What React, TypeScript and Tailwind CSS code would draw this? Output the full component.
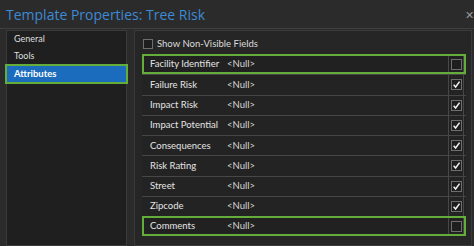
import React from 'react';

type Field = { name: string; visible: boolean; highlight?: boolean };

const FIELDS: Field[] = [
  { name: 'Facility Identifier', visible: false, highlight: true },
  { name: 'Failure Risk', visible: true },
  { name: 'Impact Risk', visible: true },
  { name: 'Impact Potential', visible: true },
  { name: 'Consequences', visible: true },
  { name: 'Risk Rating', visible: true },
  { name: 'Street', visible: true },
  { name: 'Zipcode', visible: true },
  { name: 'Comments', visible: false, highlight: true },
];

function Check({ checked }: { checked: boolean }) {
  return (
    <span className="flex h-[11px] w-[11px] items-center justify-center border border-[#6e6e6e] bg-[#1e1e1e]">
      {checked && (
        <svg width="9" height="9" viewBox="0 0 10 10">
          <path d="M1.8 5.4 L4 7.8 L8.4 1.8" fill="none" stroke="#f2f2f2" strokeWidth="1.6" />
        </svg>
      )}
    </span>
  );
}

function Row({ field }: { field: Field }) {
  return (
    <div
      className={
        field.highlight
          ? 'flex h-[20.25px] items-center border-2 border-[#64ad3a] bg-[#212121]'
          : 'flex h-[20.25px] items-center border-t border-[#474747] bg-[#232323] px-[2px]'
      }
    >
      <span className="w-[83px] truncate pl-[6px] text-[#e4e4e4]">{field.name}</span>
      <span className="flex-1 text-[#d8d8d8]">&lt;Null&gt;</span>
      <span className="flex h-full w-[16px] items-center justify-center border-x border-[#474747]">
        <Check checked={field.visible} />
      </span>
    </div>
  );
}

export default function App() {
  return (
    <div
      className="flex h-[246px] w-[474px] flex-col overflow-hidden bg-[#2b2b2b] text-[9.5px]"
      style={{ fontFamily: 'Lato, "Open Sans", sans-serif' }}
    >
      {/* Title bar */}
      <div className="flex h-[29px] shrink-0 items-center justify-between border-b border-[#3f3f3f] pl-[6px] pr-0">
        <span className="text-[14px] text-[#3d8ad6]" style={{ fontFamily: '"Open Sans", sans-serif' }}>
          Template Properties: Tree Risk
        </span>
        <span className="text-[11px] leading-none text-[#9a9a9a]">✕</span>
      </div>

      <div className="mt-[1px] flex flex-1 gap-[7px] pl-[6px] pr-[2px]">
        {/* Pages list */}
        <div className="flex w-[121px] flex-col border border-[#3a3a3a] bg-[#1f1f1f]">
          <div className="flex h-[16px] items-center pl-[7px] text-[9px] text-[#dedede]">General</div>
          <div className="flex h-[17px] items-center pl-[7px] text-[9px] text-[#dedede]">Tools</div>
          <div className="-mx-[2px] flex h-[20px] items-center border-2 border-[#64ad3a] bg-[#1b6cbd] pl-[7px] font-bold text-white">
            Attributes
          </div>
        </div>

        {/* Attributes page */}
        <div className="flex flex-1 flex-col border border-[#3a3a3a] bg-[#262626] pl-[7px] pr-[5px] pt-[6px]">
          <div className="flex h-[14px] items-center gap-[4px] pl-[1px]">
            <span className="h-[10px] w-[10px] shrink-0 border border-[#6e6e6e] bg-[#1e1e1e]" />
            <span className="text-[#dcdcdc]">Show Non-Visible Fields</span>
          </div>
          <div className="mt-[3px] flex flex-col">
            {FIELDS.map((f) => (
              <Row key={f.name} field={f} />
            ))}
          </div>
        </div>
      </div>
    </div>
  );
}
